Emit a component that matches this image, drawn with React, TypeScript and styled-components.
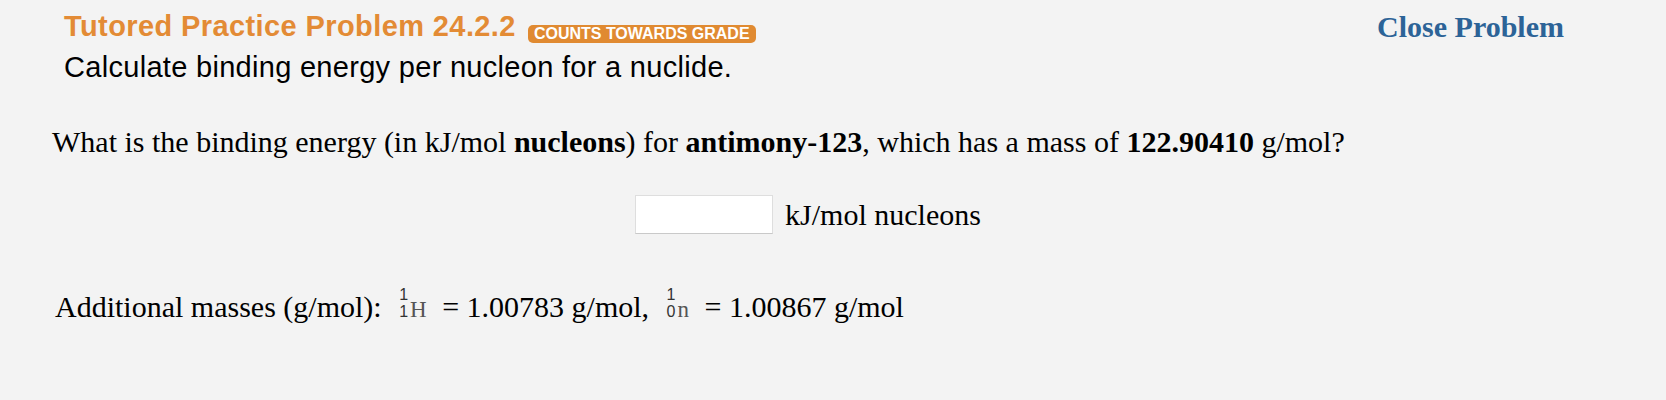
import React from "react";
import styled, { createGlobalStyle } from "styled-components";

const Global = createGlobalStyle`
  html, body { margin: 0; padding: 0; background: #f3f3f3; }
  body { font-family: "Liberation Serif", "Times New Roman", serif; color: #000; }
`;

const Page = styled.div`
  padding: 9px 102px 40px 52px;
`;

const Header = styled.header`
  display: flex;
  justify-content: space-between;
  align-items: flex-start;
`;

const TitleBlock = styled.div`
  padding-left: 12px;
  font-family: "Liberation Sans", Arial, Helvetica, sans-serif;
`;

const Title = styled.h1`
  margin: 0;
  font-size: 29px;
  line-height: 34px;
  font-weight: 700;
  letter-spacing: 0.4px;
  color: #e38b35;
`;

const Badge = styled.span`
  display: inline-block;
  margin-left: 12px;
  padding: 0 6px;
  height: 18px;
  line-height: 18px;
  border-radius: 5px;
  background: #e08a31;
  color: #fff;
  font-size: 16px;
  font-weight: 700;
  letter-spacing: 0;
  vertical-align: -3px;
`;

const Subtitle = styled.h2`
  margin: 7px 0 0;
  font-size: 29px;
  line-height: 34px;
  font-weight: 400;
  letter-spacing: 0.3px;
  color: #000;
`;

const CloseLink = styled.a`
  font-family: "Liberation Serif", "Times New Roman", serif;
  font-size: 30px;
  line-height: 36px;
  font-weight: 700;
  color: #2c6397;
  text-decoration: none;
  cursor: pointer;
`;

const Question = styled.p`
  margin: 40px 0 0;
  font-size: 30px;
  line-height: 36px;
`;

const AnswerRow = styled.div`
  margin-top: 35px;
  display: flex;
  justify-content: center;
  align-items: center;
  gap: 12px;
`;

const AnswerInput = styled.input`
  box-sizing: border-box;
  width: 138px;
  height: 39px;
  background: #fff;
  border: 1px solid #dedede;
  border-bottom-color: #c9c9c9;
  padding: 0 6px;
  font-size: 20px;
  outline: none;
`;

const Unit = styled.span`
  font-size: 30px;
  line-height: 36px;
`;

const Extra = styled.p`
  margin: 52px 0 0;
  padding-left: 3px;
  font-size: 30px;
  line-height: 36px;
`;

const Stack = styled.span`
  display: inline-flex;
  flex-direction: column;
  align-items: center;
  vertical-align: 17px;
  margin-left: 10px;
  margin-right: 2px;
  font-family: "Liberation Sans", Arial, sans-serif;
  font-size: 16px;
  line-height: 17px;
  color: #333;
`;

const Sym = styled.span`
  margin-right: 8px;
  font-family: "Liberation Serif", "Times New Roman", serif;
  font-size: 23px;
  color: #555;
`;

function Isotope({ mass, number, symbol }: { mass: string; number: string; symbol: string }) {
  return (
    <>
      <Stack>
        <span>{mass}</span>
        <span>{number}</span>
      </Stack>
      <Sym>{symbol}</Sym>
    </>
  );
}

export default function App() {
  return (
    <>
      <Global />
      <Page>
        <Header>
          <TitleBlock>
            <Title>
              Tutored Practice Problem 24.2.2
              <Badge>COUNTS TOWARDS GRADE</Badge>
            </Title>
            <Subtitle>Calculate binding energy per nucleon for a nuclide.</Subtitle>
          </TitleBlock>
          <CloseLink>Close Problem</CloseLink>
        </Header>
        <Question>
          What is the binding energy (in kJ/mol <b>nucleons</b>) for <b>antimony-123</b>, which has a mass of{" "}
          <b>122.90410</b> g/mol?
        </Question>
        <AnswerRow>
          <AnswerInput type="text" aria-label="answer" />
          <Unit>kJ/mol nucleons</Unit>
        </AnswerRow>
        <Extra>
          Additional masses (g/mol): <Isotope mass="1" number="1" symbol="H" /> = 1.00783 g/mol,{" "}
          <Isotope mass="1" number="0" symbol="n" /> = 1.00867 g/mol
        </Extra>
      </Page>
    </>
  );
}
